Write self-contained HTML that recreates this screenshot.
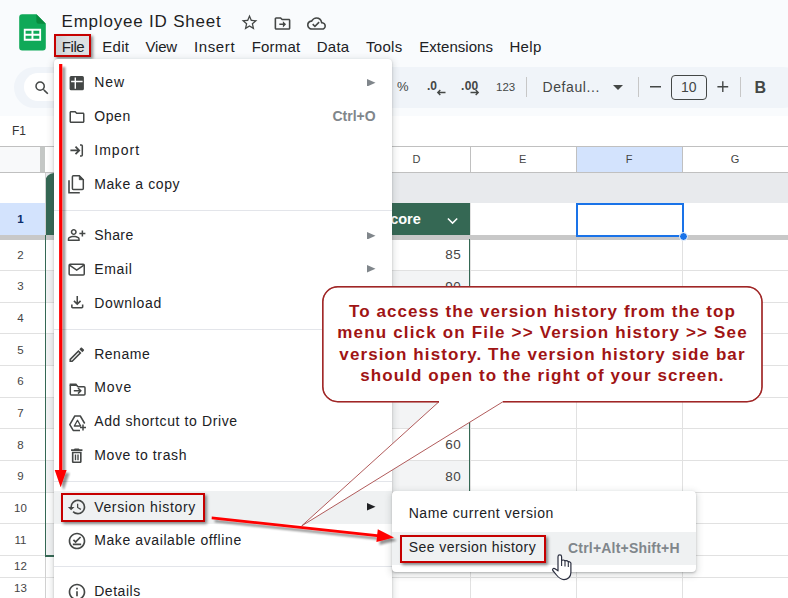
<!DOCTYPE html>
<html>
<head>
<meta charset="utf-8">
<title>Employee ID Sheet</title>
<style>
*{box-sizing:border-box;margin:0;padding:0}
html,body{width:788px;height:598px;overflow:hidden}
body{background:#f9fbfd;font-family:"Liberation Sans",sans-serif;color:#202124;position:relative}
.abs{position:absolute}
.t{position:absolute;white-space:pre;line-height:20px}
/* header */
#title{left:61.5px;top:10px;font-size:17px;color:#1f1f1f;letter-spacing:.8px;line-height:24px}
.mb{font-size:15px;color:#202124;top:36.5px}
/* toolbar */
#toolbar{left:14px;top:66.5px;width:790px;height:41px;border-radius:20.5px;background:#f0f4f9}
#search{left:24px;top:73px;width:120px;height:28px;border-radius:14px;background:#fff}
.tb{color:#444746}
.vdiv{position:absolute;width:1px;background:#c7c7c7;top:77px;height:20px}
/* formula bar */
#fbar{left:0;top:116px;width:788px;height:30px;background:#fff}
/* grid */
#grid{left:0;top:146px;width:788px;height:452px;background:#fff}
.hl{position:absolute;height:1px;background:#e1e1e1}
.vl{position:absolute;width:1px;background:#e1e1e1}
.rh{position:absolute;left:0;width:41px;text-align:center;font-size:11.5px;color:#444;line-height:14px}
.ch{position:absolute;top:152px;font-size:11px;color:#444;text-align:center;line-height:14px}
.num{position:absolute;font-size:13.5px;color:#444;text-align:right;line-height:16px;letter-spacing:.4px}
/* menu */
#menu{left:54px;top:59px;width:338px;height:560px;background:#fff;border-radius:4px;box-shadow:0 2px 6px 2px rgba(60,64,67,.15),0 1px 2px rgba(60,64,67,.3)}
.mi{position:absolute;left:94.2px;font-size:14px;color:#202124;white-space:pre;line-height:20px}
.sep{position:absolute;left:54px;width:338px;height:1px;background:#e3e5ea}
.sc{position:absolute;font-size:14px;color:#80868b;white-space:pre;line-height:20px;font-weight:bold}
.ic{position:absolute}
#sub{left:392px;top:491px;width:304px;height:81px;background:#fff;border-radius:4px;box-shadow:0 2px 6px 2px rgba(60,64,67,.15),0 1px 2px rgba(60,64,67,.3)}
.redbox{position:absolute;border:2.4px solid #c60000;box-shadow:2px 2px 3px rgba(0,0,0,.45)}
#callout-text{position:absolute;left:323px;top:301px;width:439px;text-align:center;font-weight:bold;font-size:17px;color:#a01414;line-height:21.33px;white-space:pre}
</style>
</head>
<body>
<!-- HEADER -->
<svg class="abs" style="left:19px;top:14px" width="28" height="37" viewBox="0 0 28 37">
  <path d="M3.200 0.300 H17.400 L26.800 9.700 V33.500 a3 3 0 0 1 -3 3 H3.200 a3 3 0 0 1 -3 -3 V3.300 a3 3 0 0 1 3 -3z" fill="#0fa958"/>
  <path d="M17.400 0.300 L26.800 9.700 H19.900 a2.500 2.500 0 0 1 -2.500 -2.500z" fill="#088a3e"/>
  <path d="M4.800 14.700 h17.300 v12.100 h-17.300z M6.600 16.700 v3.100 h5.900 v-3.100z M14.400 16.700 v3.100 h5.900 v-3.100z M6.600 21.700 v3.100 h5.900 v-3.100z M14.400 21.700 v3.100 h5.900 v-3.100z" fill="#fff" fill-rule="evenodd"/>
</svg>
<div id="title" class="t">Employee ID Sheet</div>
<!-- title icons -->
<svg class="abs" style="left:240px;top:13px" width="19" height="19" viewBox="0 0 24 24"><path fill="#444746" d="M22 9.24l-7.19-.62L12 2 9.19 8.63 2 9.24l5.46 4.73L5.82 21 12 17.27 18.18 21l-1.63-7.03L22 9.24zM12 15.4l-3.76 2.27 1-4.28-3.32-2.88 4.38-.38L12 6.1l1.71 4.04 4.38.38-3.32 2.88 1 4.28L12 15.4z"/></svg>
<svg class="abs" style="left:273px;top:14px" width="19" height="19" viewBox="0 0 24 24"><path fill="#444746" d="M20 6h-8l-2-2H4c-1.1 0-2 .9-2 2v12c0 1.1.9 2 2 2h16c1.1 0 2-.9 2-2V8c0-1.1-.9-2-2-2zm0 12H4V6h5.17l2 2H20v10z"/><path fill="#444746" d="M12.5 17l4-4-4-4v3H8v2h4.500z"/></svg>
<svg class="abs" style="left:307px;top:13.500px" width="19" height="19" viewBox="0 0 24 24"><path fill="#444746" d="M19.35 10.040A7.490 7.490 0 0 0 12 4C9.110 4 6.600 5.640 5.350 8.040A5.994 5.994 0 0 0 0 14c0 3.310 2.690 6 6 6h13c2.760 0 5-2.240 5-5 0-2.640-2.050-4.780-4.650-4.960zM19 18H6c-2.210 0-4-1.790-4-4 0-2.050 1.530-3.760 3.560-3.970l1.070-.11.500-.95A5.469 5.469 0 0 1 12 6c2.620 0 4.880 1.860 5.390 4.430l.3 1.500 1.530.11A2.980 2.980 0 0 1 22 15c0 1.650-1.350 3-3 3zm-9-3.820l-2.090-2.090L6.500 13.500 10 17l6.010-6.010-1.410-1.410z"/></svg>
<!-- menubar -->
<div class="abs" style="left:55px;top:36px;width:34px;height:20px;background:linear-gradient(90deg,#c9cdd1,#dcdfe2 40%,#dde0e3)"></div>
<div class="t mb" style="left:61.7px;letter-spacing:-0.39px">File</div>
<div class="t mb" style="left:102.3px;letter-spacing:0.25px">Edit</div>
<div class="t mb" style="left:145.4px;letter-spacing:-0.15px">View</div>
<div class="t mb" style="left:194.0px;letter-spacing:0.62px">Insert</div>
<div class="t mb" style="left:251.7px;letter-spacing:0.2px">Format</div>
<div class="t mb" style="left:316.7px;letter-spacing:0.27px">Data</div>
<div class="t mb" style="left:366.1px;letter-spacing:0.27px">Tools</div>
<div class="t mb" style="left:419.2px;letter-spacing:0.05px">Extensions</div>
<div class="t mb" style="left:509.4px;letter-spacing:0.35px">Help</div>
<div class="redbox" style="left:53.800px;top:34px;width:37.200px;height:23.200px"></div>

<!-- TOOLBAR -->
<div id="toolbar" class="abs"></div>
<div id="search" class="abs"></div>
<svg class="abs" style="left:33px;top:79px" width="18" height="18" viewBox="0 0 24 24"><path fill="#444746" d="M15.500 14h-.79l-.28-.27A6.471 6.471 0 0 0 16 9.500 6.500 6.500 0 1 0 9.500 16c1.610 0 3.090-.59 4.230-1.570l.27.28v.79l5 4.990L20.490 19l-4.990-5zm-6 0C7.010 14 5 11.990 5 9.500S7.010 5 9.500 5 14 7.010 14 9.500 11.990 14 9.500 14z"/></svg>
<div class="t tb" style="left:397px;top:77px;font-size:13px">%</div>
<div class="t tb" style="left:427px;top:75.500px;font-size:12px;font-weight:bold">.0</div>
<div class="t tb" style="left:461px;top:75.500px;font-size:12px;font-weight:bold;letter-spacing:.3px">.00</div>
<svg class="abs" style="left:436px;top:89px" width="10" height="7" viewBox="0 0 10 7"><path d="M9.500 3.500H2M4.300 1L1.800 3.500 4.300 6" fill="none" stroke="#444746" stroke-width="1.400"/></svg>
<svg class="abs" style="left:470px;top:89px" width="10" height="7" viewBox="0 0 10 7"><path d="M0.500 3.500H8M5.700 1L8.200 3.500 5.700 6" fill="none" stroke="#444746" stroke-width="1.400"/></svg>
<div class="t tb" style="left:496px;top:77px;font-size:11.500px">123</div>
<div class="vdiv" style="left:526px"></div>
<div class="t tb" style="left:542.500px;top:77px;font-size:14px;letter-spacing:.6px">Defaul...</div>
<svg class="abs" style="left:613px;top:84.500px" width="10" height="5" viewBox="0 0 10 5"><path d="M0 0h10L5 5z" fill="#444746"/></svg>
<div class="vdiv" style="left:638px"></div>
<svg class="abs" style="left:640px;top:70px" width="100" height="34" viewBox="640 70 100 34"><path d="M650 86.700H661M717.400 86.700H728.200M722.800 81.300V92.100" stroke="#444746" stroke-width="1.400" fill="none"/></svg>
<div class="abs" style="left:671px;top:74.500px;width:36px;height:25.500px;border:1px solid #444746;border-radius:4px"></div>
<div class="t tb" style="left:681px;top:77px;font-size:14px">10</div>


<div class="vdiv" style="left:740px"></div>
<div class="t tb" style="left:754.500px;top:77.500px;font-size:16px;font-weight:bold">B</div>

<!-- FORMULA BAR -->
<div id="fbar" class="abs"></div>
<div class="t" style="left:12px;top:121px;font-size:12px;color:#333">F1</div>

<!-- GRID -->
<div id="grid" class="abs"></div>
<!--GRID-CONTENT-->
<div class="abs" style="left:0;top:146px;width:788px;height:26px;background:#fff"></div>
<div class="abs" style="left:0;top:146px;width:40px;height:26px;background:#f8f9fa"></div>
<div class="abs" style="left:576px;top:147px;width:106px;height:25px;background:#d3e3fd"></div>
<div class="hl" style="left:0;top:146px;width:788px;background:#c0c0c0"></div>
<div class="hl" style="left:0;top:172px;width:788px;background:#c0c0c0"></div>
<div class="abs" style="left:40px;top:147px;width:5px;height:25px;background:#c4c7c5"></div>
<div class="vl" style="left:469.5px;top:147px;height:25px;background:#c0c0c0"></div>
<div class="vl" style="left:575.7px;top:147px;height:25px;background:#c0c0c0"></div>
<div class="vl" style="left:682px;top:147px;height:25px;background:#c0c0c0"></div>
<div class="ch" style="left:396.6px;width:40px">D</div>
<div class="ch" style="left:502.6px;width:40px">E</div>
<div class="ch" style="left:609px;width:40px">F</div>
<div class="ch" style="left:715px;width:40px">G</div>
<div class="abs" style="left:45px;top:173px;width:743px;height:30.400px;background:#e8eaed"></div>
<div class="abs" style="left:45px;top:173px;width:30px;height:31px;background:#356854;border-radius:9px 0 0 0"></div>
<div class="abs" style="left:0;top:173px;width:45px;height:430px;background:#fff"></div>
<div class="abs" style="left:0;top:203.400px;width:45px;height:32px;background:#d3e3fd"></div>
<div class="abs" style="left:45px;top:203.400px;width:425px;height:32.100px;background:#356854"></div>
<div class="abs" style="left:46px;top:270.6px;width:423px;height:31.7px;background:#f3f4f5"></div>
<div class="abs" style="left:46px;top:333.9px;width:423px;height:31.7px;background:#f3f4f5"></div>
<div class="abs" style="left:46px;top:397.3px;width:423px;height:31.7px;background:#f3f4f5"></div>
<div class="abs" style="left:46px;top:460.6px;width:423px;height:31.7px;background:#f3f4f5"></div>
<div class="abs" style="left:46px;top:523.9px;width:423px;height:31.7px;background:#f3f4f5"></div>
<div class="hl" style="left:0;top:270.1px;width:788px"></div>
<div class="hl" style="left:0;top:301.7px;width:788px"></div>
<div class="hl" style="left:0;top:333.4px;width:788px"></div>
<div class="hl" style="left:0;top:365.1px;width:788px"></div>
<div class="hl" style="left:0;top:396.8px;width:788px"></div>
<div class="hl" style="left:0;top:428.4px;width:788px"></div>
<div class="hl" style="left:0;top:460.1px;width:788px"></div>
<div class="hl" style="left:0;top:491.8px;width:788px"></div>
<div class="hl" style="left:0;top:523.4px;width:788px"></div>
<div class="hl" style="left:0;top:555.1px;width:788px"></div>
<div class="hl" style="left:0;top:576.6px;width:788px"></div>
<div class="hl" style="left:0;top:598.1px;width:788px"></div>
<div class="vl" style="left:45px;top:173px;height:430px;background:#d0d0d0"></div>
<div class="vl" style="left:469.5px;top:203px;height:400px"></div>
<div class="vl" style="left:575.7px;top:203px;height:400px"></div>
<div class="vl" style="left:682px;top:203px;height:400px"></div>
<div class="abs" style="left:0;top:235.400px;width:788px;height:4.300px;background:#c8c8c8"></div>
<div class="abs" style="left:45px;top:235px;width:1px;height:321px;background:#356854"></div>
<div class="abs" style="left:469.200px;top:239px;width:1.200px;height:317px;background:#356854"></div>
<div class="abs" style="left:45px;top:555px;width:425.500px;height:1.500px;background:#356854"></div>
<div class="rh" style="top:212.4px;font-weight:bold;color:#0b2e6b">1</div>
<div class="rh" style="top:247.7px">2</div>
<div class="rh" style="top:279.4px">3</div>
<div class="rh" style="top:311.1px">4</div>
<div class="rh" style="top:342.7px">5</div>
<div class="rh" style="top:374.4px">6</div>
<div class="rh" style="top:406.1px">7</div>
<div class="rh" style="top:437.8px">8</div>
<div class="rh" style="top:469.4px">9</div>
<div class="rh" style="top:501.1px">10</div>
<div class="rh" style="top:532.8px">11</div>
<div class="rh" style="top:559.4px">12</div>
<div class="rh" style="top:580.9px">13</div>
<div class="t" style="left:380.500px;top:209px;font-size:14.500px;font-weight:bold;color:#fff">Score</div>
<svg class="abs" style="left:446px;top:216px" width="14" height="10" viewBox="446 216 14 10"><path d="M447.900 218.500L452.550 223.100 457.200 218.500" fill="none" stroke="#fff" stroke-width="1.500"/></svg>
<div class="num" style="left:400px;width:61.200px;top:246.9px">85</div>
<div class="num" style="left:400px;width:61.200px;top:278.6px">90</div>
<div class="num" style="left:400px;width:61.200px;top:310.3px">75</div>
<div class="num" style="left:400px;width:61.200px;top:341.9px">88</div>
<div class="num" style="left:400px;width:61.200px;top:373.6px">92</div>
<div class="num" style="left:400px;width:61.200px;top:405.3px">70</div>
<div class="num" style="left:400px;width:61.200px;top:437.0px">60</div>
<div class="num" style="left:400px;width:61.200px;top:468.6px">80</div>
<div class="num" style="left:400px;width:61.200px;top:500.3px">95</div>
<div class="num" style="left:400px;width:61.200px;top:532.0px">78</div>
<div class="abs" style="left:575.500px;top:203px;width:108px;height:33.500px;border:2px solid #1a73e8;background:#fff"></div>
<div class="abs" style="left:678.500px;top:231.500px;width:9px;height:9px;border-radius:50%;background:#1a73e8;border:1px solid #fff"></div>
<!--MENU-->
<div id="menu" class="abs"></div>
<div class="abs" style="left:54px;top:490.600px;width:338px;height:33px;background:#eff1f2"></div>
<div class="mi" style="top:72.3px;letter-spacing:0.99px">New</div>
<div class="mi" style="top:106.3px;letter-spacing:0.58px">Open</div>
<div class="mi" style="top:140.3px;letter-spacing:1.06px">Import</div>
<div class="mi" style="top:173.8px;letter-spacing:0.6px">Make a copy</div>
<div class="mi" style="top:224.9px;letter-spacing:0.41px">Share</div>
<div class="mi" style="top:258.7px;letter-spacing:0.67px">Email</div>
<div class="mi" style="top:292.5px;letter-spacing:0.7px">Download</div>
<div class="mi" style="top:343.5px;letter-spacing:0.52px">Rename</div>
<div class="mi" style="top:377.3px;letter-spacing:0.99px">Move</div>
<div class="mi" style="top:411.3px;letter-spacing:0.61px">Add shortcut to Drive</div>
<div class="mi" style="top:444.5px;letter-spacing:0.62px">Move to trash</div>
<div class="mi" style="top:496.5px;letter-spacing:0.66px">Version history</div>
<div class="mi" style="top:530.3px;letter-spacing:0.6px">Make available offline</div>
<div class="mi" style="top:581.1px;letter-spacing:0.53px">Details</div>
<div class="sep" style="top:209.7px"></div>
<div class="sep" style="top:328.7px"></div>
<div class="sep" style="top:480.7px"></div>
<div class="sep" style="top:566.3px"></div>
<svg class="abs" style="left:367px;top:78.9px" width="8.500" height="7.600" viewBox="0 0 8.500 7.600"><path d="M0 0L8.500 3.800 0 7.600z" fill="#80868b"/></svg>
<svg class="abs" style="left:367px;top:231.5px" width="8.500" height="7.600" viewBox="0 0 8.500 7.600"><path d="M0 0L8.500 3.800 0 7.600z" fill="#80868b"/></svg>
<svg class="abs" style="left:367px;top:265.3px" width="8.500" height="7.600" viewBox="0 0 8.500 7.600"><path d="M0 0L8.500 3.800 0 7.600z" fill="#80868b"/></svg>
<svg class="abs" style="left:367px;top:503.3px" width="8.500" height="7.600" viewBox="0 0 8.500 7.600"><path d="M0 0L8.500 3.800 0 7.600z" fill="#202124"/></svg>
<div class="sc" style="left:332.500px;top:105.600px">Ctrl+O</div>
<svg class="ic" style="left:68px;top:74px" width="18" height="18" viewBox="68 74 18 18"><rect x="69.600" y="75.900" width="14.300" height="14.400" rx="1.500" fill="#444746"/><path d="M75.300 77.500V88.800M71.100 81.550H82.600" stroke="#fff" stroke-width="1.400" fill="none"/></svg>
<svg class="ic" style="left:67.7px;top:107.7px" width="18" height="18" viewBox="0 0 24 24"><path fill="#444746" d="M9.170 6l2 2H20v10H4V6h5.170M10 4H4c-1.100 0-1.990.9-1.990 2L2 18c0 1.100.9 2 2 2h16c1.100 0 2-.9 2-2V8c0-1.100-.9-2-2-2h-8l-2-2z"/></svg>
<svg class="ic" style="left:68px;top:142px" width="18" height="18" viewBox="68 142 18 18"><path d="M70.400 150.400H79M75.500 146.700L79.200 150.400 75.500 154.100" fill="none" stroke="#444746" stroke-width="1.800"/><path d="M80 144.900H81.300a1 1 0 0 1 1 1V155a1 1 0 0 1 -1 1H80" fill="none" stroke="#444746" stroke-width="1.500"/></svg>
<svg class="ic" style="left:66px;top:173px" width="21" height="23" viewBox="66 173 21 23"><path d="M73.400 175.700H79.300L83.300 179.700V188.500a1 1 0 0 1 -1 1H73.400a1 1 0 0 1 -1 -1V176.700a1 1 0 0 1 1 -1z" fill="none" stroke="#444746" stroke-width="1.500"/><path d="M79.300 175.700V179.700H83.300z" fill="#444746" stroke="#444746" stroke-width=".8" stroke-linejoin="round"/><path d="M69 180.200V192.800H79.800" fill="none" stroke="#444746" stroke-width="1.600"/></svg>
<svg class="ic" style="left:66.9px;top:225.7px" width="19.5" height="19.5" viewBox="0 0 26 26"><path fill="#444746" d="M21.500 9V6h-2v3h-3v2h3v3h2v-3h3V9h-3zM9 12c2.210 0 4-1.790 4-4s-1.790-4-4-4-4 1.790-4 4 1.790 4 4 4zm0-6c1.100 0 2 .9 2 2s-.9 2-2 2-2-.9-2-2 .9-2 2-2zm6.390 8.560C13.710 13.700 11.530 13 9 13s-4.710.7-6.390 1.560A2.970 2.970 0 0 0 1 17.220V20h16v-2.780c0-1.120-.61-2.150-1.610-2.660zM15 18H3v-.78c0-.38.2-.72.520-.88C4.710 15.730 6.630 15 9 15c2.370 0 4.290.73 5.480 1.340.32.160.52.500.52.880V18z"/></svg>
<svg class="ic" style="left:66px;top:261px" width="22" height="17" viewBox="66 261 22 17"><rect x="69.150" y="264.150" width="15.100" height="10.800" rx="1" fill="none" stroke="#444746" stroke-width="1.500"/><path d="M69.500 265.200L76.700 270.200 83.900 265.200" fill="none" stroke="#444746" stroke-width="1.500"/></svg>
<svg class="ic" style="left:67.5px;top:293.1px" width="18.5" height="18.5" viewBox="0 0 24 24"><path fill="#444746" d="M12 16l-5-5 1.400-1.450 2.600 2.600V4h2v8.150l2.600-2.600L17 11l-5 5zm-6 4c-.55 0-1.020-.2-1.410-.59C4.200 19.020 4 18.550 4 18v-3h2v3h12v-3h2v3c0 .55-.2 1.020-.59 1.410-.39.39-.86.59-1.410.59H6z"/></svg>
<svg class="ic" style="left:66.8px;top:345.1px" width="19.5" height="19.5" viewBox="0 0 24 24"><path fill="#444746" d="M14.060 9.020l.92.920L5.920 19H5v-.92l9.060-9.060M17.660 3c-.25 0-.51.1-.7.290l-1.830 1.830 3.750 3.750 1.830-1.830a.996.996 0 0 0 0-1.410l-2.340-2.340c-.2-.2-.45-.29-.71-.29zm-3.600 3.190L3 17.250V21h3.750L17.810 9.940l-3.750-3.750z"/></svg>
<svg class="ic" style="left:68px;top:382px" width="20" height="16" viewBox="68 382 20 16"><path d="M70.300 385.200H76.500L78 386.700H84a1 1 0 0 1 1 1V394a1 1 0 0 1 -1 1H71.300a1 1 0 0 1 -1 -1z" fill="none" stroke="#444746" stroke-width="1.500" stroke-linejoin="round"/><path d="M69.600 383.600H76.300L77.800 385.800H69.600z" fill="#444746"/><path d="M73.800 390.800H80.500M78 388L80.800 390.800 78 393.600" fill="none" stroke="#444746" stroke-width="1.500"/></svg>
<svg class="ic" style="left:67px;top:413px" width="21" height="20" viewBox="67 413 21 20"><path d="M80 430.400H73.200L69.800 424.600 74.800 416H80.300L84.700 423.500" fill="none" stroke="#444746" stroke-width="1.500" stroke-linejoin="round"/><path d="M77.500 420.300L74.300 426H80.700z" fill="none" stroke="#444746" stroke-width="1.300" stroke-linejoin="round"/><path d="M83 424.500V430.500M80 427.500H86" fill="none" stroke="#444746" stroke-width="1.500"/></svg>
<svg class="ic" style="left:66.9px;top:445.8px" width="19.5" height="19.5" viewBox="0 0 24 24"><path fill="#444746" d="M6 19c0 1.100.9 2 2 2h8c1.100 0 2-.9 2-2V7H6v12zM8 9h8v10H8V9zm7.500-5l-1-1h-5l-1 1H5v2h14V4h-3.500z"/><path fill="#444746" d="M9.600 10.500h1.700v7H9.600zM12.700 10.500h1.700v7h-1.700z"/></svg>
<svg class="ic" style="left:66.8px;top:497.1px" width="20" height="20" viewBox="0 0 24 24"><path fill="#444746" d="M13 3a9 9 0 0 0-9 9H1l3.890 3.890.07.14L9 12H6c0-3.870 3.130-7 7-7s7 3.130 7 7-3.130 7-7 7c-1.930 0-3.680-.79-4.940-2.060l-1.420 1.420A8.954 8.954 0 0 0 13 21a9 9 0 0 0 0-18zm-1 5v5l4.250 2.520.77-1.280-3.520-2.090V8H12z"/></svg>
<svg class="ic" style="left:66.6px;top:531.1px" width="20" height="20" viewBox="0 0 24 24"><path fill="#444746" d="M12 2C6.500 2 2 6.500 2 12s4.500 10 10 10 10-4.500 10-10S17.500 2 12 2zm0 18c-4.410 0-8-3.590-8-8s3.590-8 8-8 8 3.590 8 8-3.590 8-8 8zm-5-5h10v2H7zm3.300-3.200L8.400 9.900 7 11.300l3.300 3.300L17 7.900l-1.400-1.400z"/></svg>
<svg class="ic" style="left:66.6px;top:582.2px" width="20" height="20" viewBox="0 0 24 24"><path fill="#444746" d="M11 7h2v2h-2zm0 4h2v6h-2zm1-9C6.480 2 2 6.480 2 12s4.480 10 10 10 10-4.480 10-10S17.520 2 12 2zm0 18c-4.410 0-8-3.590-8-8s3.590-8 8-8 8 3.590 8 8-3.590 8-8 8z"/></svg>
<!--OVERLAY-->
<div id="sub" class="abs"></div>
<div class="abs" style="left:392px;top:532px;width:304px;height:33px;background:#eff1f2"></div>
<div class="mi" style="left:408.700px;top:503.300px;letter-spacing:0.57px">Name current version</div>
<div class="mi" style="left:408.700px;top:536.700px;letter-spacing:0.44px">See version history</div>
<div class="sc" style="left:568px;top:537.900px;letter-spacing:.2px">Ctrl+Alt+Shift+H</div>
<div class="redbox" style="left:61px;top:492.800px;width:143.500px;height:29px"></div>
<div class="redbox" style="left:400.300px;top:534.600px;width:145.500px;height:28.400px"></div>
<svg class="abs" style="left:0;top:0" width="788" height="598" viewBox="0 0 788 598">
<defs><filter id="ds" x="-20%" y="-20%" width="150%" height="150%"><feGaussianBlur in="SourceAlpha" stdDeviation="1.300"/><feOffset dx="2.500" dy="2.500"/><feComponentTransfer><feFuncA type="linear" slope=".42"/></feComponentTransfer><feMerge><feMergeNode/><feMergeNode in="SourceGraphic"/></feMerge></filter></defs>
<g filter="url(#ds)" fill="#ff0000"><path d="M59.100 64H62.300V470H66.600L60.650 487.200 54.700 470H59.100z"/></g>
<g filter="url(#ds)" fill="#ff0000"><path d="M211.6 519.3 L376.9 537.1 L376.4 542.1 L394.0 537.5 L377.8 529.2 L377.2 534.3 L211.8 516.5z"/></g>
<path d="M337.8 286.8H747A15 15 0 0 1 762 301.8V386.7A15 15 0 0 1 747 401.7H503L301.7 525.9L439 401.7H337.8A15 15 0 0 1 322.8 386.7V301.8A15 15 0 0 1 337.8 286.8z" fill="#fff" stroke="#a84848" stroke-width=".9" stroke-linejoin="round"/>
<path d="M503 401.7H747A15 15 0 0 0 762 386.7V301.8A15 15 0 0 0 747 286.8H337.8A15 15 0 0 0 322.8 301.8V386.7A15 15 0 0 0 337.8 401.7H439" fill="none" stroke="#a02626" stroke-width="1.500"/>
</svg>
<div id="callout-text"><span style="letter-spacing:1.08px">To access the version history from the top</span>
<span style="letter-spacing:1.17px">menu click on File &gt;&gt; Version history &gt;&gt; See</span>
<span style="letter-spacing:1.1px">version history. The version history side bar</span>
<span style="letter-spacing:1.08px">should open to the right of your screen.</span></div>
<svg class="abs" style="left:548px;top:550px" width="28" height="34" viewBox="548 550 28 34"><path d="M558 567.500V556.700a1.800 1.800 0 0 1 3.600 0V560.600Q563.300 559.300 565 560.800Q566.800 560 568.300 561.600Q569.800 561.200 570.900 563V572.500C570.900 577 567.500 579.600 564 579.600C560.500 579.600 558.500 577.500 556.500 575L552.800 570.500C552 569.300 553.300 568 554.600 568.600L558 570.800z" fill="#fff" stroke="#2a2e3f" stroke-width="1.200" stroke-linejoin="round"/><path d="M561.600 560.600V566M565 560.800V566.500M568.300 561.600V567" fill="none" stroke="#2a2e3f" stroke-width="1.100"/></svg>
</body>
</html>
